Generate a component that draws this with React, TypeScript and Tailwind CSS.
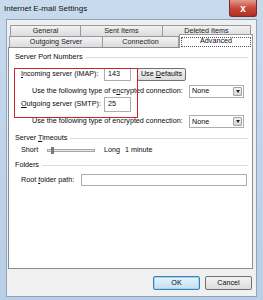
import React from "react";

const font = { fontFamily: '"Liberation Sans", Arial, sans-serif' };

function GroupHeader({ children }: { children: React.ReactNode }) {
  return (
    <div className="flex h-[12px] items-center pl-[6px] pr-[4px]">
      <span className="whitespace-nowrap">{children}</span>
      <div className="ml-[3px] h-px flex-1 bg-[#d5dde6]" />
    </div>
  );
}

function Select() {
  return (
    <div className="flex h-[13px] w-[55px] items-center border border-[#abadb3] bg-white">
      <span className="flex-1 pl-[2px] leading-none">None</span>
      <div className="mr-[1px] flex h-[9px] w-[9px] items-center justify-center rounded-[1px] border border-[#a0a4aa] bg-gradient-to-b from-[#f4f4f4] to-[#d6d6d6]">
        <div className="h-0 w-0 border-x-[2.5px] border-t-[3px] border-x-transparent border-t-[#222]" />
      </div>
    </div>
  );
}

function Tab({ w, label, h = "h-[11px]" }: { w: string; label: string; h?: string }) {
  return (
    <div
      className={`${w} ${h} flex items-center justify-center border border-b-0 border-[#979aa0] bg-gradient-to-b from-[#f3f3f3] to-[#dcdcdc] text-[#222] -ml-px first:ml-0`}
    >
      {label}
    </div>
  );
}

export default function App() {
  return (
    <div
      className="relative flex h-[300px] w-[263px] flex-col bg-gradient-to-b from-[#c7daee] via-[#bfd4ea] to-[#b9cfe6] text-[7.2px] text-[#0a0a0a]"
      style={font}
    >
      {/* title bar */}
      <div className="flex h-[19px] items-start">
        <span className="ml-[4px] mt-[3px] text-[8px] text-[#111]">Internet E-mail Settings</span>
        <div className="ml-auto mr-[6px] flex h-[17px] w-[28px] items-center justify-center rounded-b-[3px] border border-t-0 border-[#7b2b22] bg-gradient-to-b from-[#e39a8b] via-[#c8473a] to-[#b0301f] text-[10px] font-bold text-white">
          x
        </div>
      </div>

      {/* client */}
      <div className="mx-[6px] flex h-[278px] flex-col border border-[#8ea4bd] bg-[#f0f0f0]">
        {/* tabs */}
        <div className="mt-[5px] flex flex-col">
          <div className="ml-[3px] flex">
            <Tab w="w-[71px]" label="General" />
            <Tab w="w-[83px]" label="Sent Items" />
            <Tab w="w-[89px]" label="Deleted Items" />
          </div>
          <div className="relative ml-[2px] flex">
            <Tab w="w-[94px]" label="Outgoing Server" />
            <Tab w="w-[77px]" label="Connection" />
            <div className="absolute left-[170px] top-[-2px] z-10 flex h-[14px] w-[74px] items-center justify-center border border-b-0 border-[#979aa0] bg-white">
              <div className="flex h-[10px] w-[70px] items-center justify-center border border-dotted border-[#555]">
                Advanced
              </div>
            </div>
          </div>
        </div>

        {/* panel */}
        <div className="relative ml-[1px] flex h-[222px] w-[245px] flex-col border border-[#898c95] bg-white">
          <div className="h-[3px]" />
          <GroupHeader>Server Port Numbers</GroupHeader>
          <div className="h-[5px]" />
          <div className="flex h-[13px] items-center pl-[12px]">
            <span className="w-[83px] whitespace-nowrap">
              <u>I</u>ncoming server (IMAP):
            </span>
            <div className="flex h-[13px] w-[27px] items-center border border-[#abadb3] bg-white pl-[3px]">143</div>
            <div className="ml-[6px] flex h-[13px] w-[49px] items-center justify-center rounded-[2px] border border-[#707070] bg-gradient-to-b from-[#f3f3f3] to-[#dcdcdc]">
              Use <u className="ml-[2px]">D</u>efaults
            </div>
          </div>
          <div className="h-[4px]" />
          <div className="flex h-[12px] items-center pl-[23px]">
            <span className="w-[157px] whitespace-nowrap">
              Use the following type of e<u>n</u>crypted connection:
            </span>
            <Select />
          </div>
          <div className="flex h-[15px] items-center pl-[12px]">
            <span className="w-[83px] whitespace-nowrap">
              <u>O</u>utgoing server (SMTP):
            </span>
            <div className="flex h-[15px] w-[27px] items-center border border-[#abadb3] bg-white pl-[3px]">25</div>
          </div>
          <div className="h-[3px]" />
          <div className="flex h-[13px] items-center pl-[23px]">
            <span className="w-[157px] whitespace-nowrap">
              Use the following type of encrypted connection:
            </span>
            <Select />
          </div>
          <div className="h-[4px]" />
          <GroupHeader>
            Server <u>T</u>imeouts
          </GroupHeader>
          <div className="flex h-[12px] items-center pl-[12px]">
            <span className="w-[26px]">Short</span>
            <div className="relative h-[3px] w-[48px] border border-[#a5a5a5] bg-[#e6e6e6]">
              <div className="absolute left-[3px] top-[-3px] h-[7px] w-[3px] bg-[#6f7a86]" />
            </div>
            <span className="ml-[9px] w-[21px]">Long</span>
            <span>1 minute</span>
          </div>
          <div className="h-[3px]" />
          <GroupHeader>Folders</GroupHeader>
          <div className="h-[3px]" />
          <div className="flex h-[12px] items-center pl-[12px]">
            <span className="w-[60px] whitespace-nowrap">
              Root <u>f</u>older path:
            </span>
            <div className="h-[12px] w-[166px] border border-[#abadb3] bg-white" />
          </div>

          {/* red highlight annotation */}
          <div className="absolute left-[5px] top-[20px] h-[50px] w-[124px] border-[1.5px] border-[#c8282c]" />
        </div>

        {/* buttons */}
        <div className="mt-[7px] flex justify-end gap-[5px] pr-[4px]">
          <div className="flex h-[14px] w-[47px] items-center justify-center rounded-[2px] border border-[#3c7fb1] bg-gradient-to-b from-[#e8f4fc] to-[#bfe0f4] shadow-[inset_0_0_0_1px_#9fd6f5]">
            OK
          </div>
          <div className="flex h-[14px] w-[47px] items-center justify-center rounded-[2px] border border-[#707070] bg-gradient-to-b from-[#f3f3f3] to-[#dcdcdc]">
            Cancel
          </div>
        </div>
      </div>
    </div>
  );
}
